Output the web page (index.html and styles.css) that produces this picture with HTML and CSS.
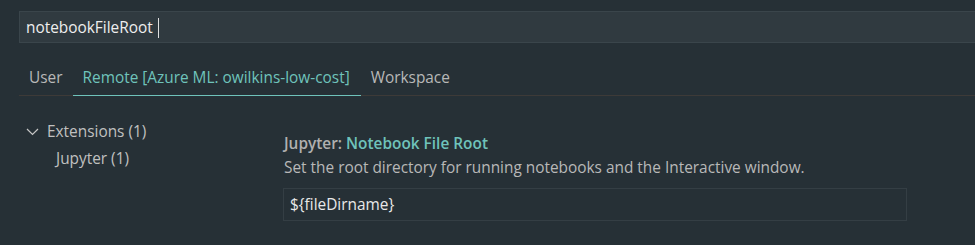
FILE: index.html
```html
<!DOCTYPE html>
<html>
<head>
<meta charset="utf-8">
<link rel="stylesheet" href="styles.css">
</head>
<body>
<div class="page">
  <div class="search"><span class="search-text">notebookFileRoot</span><span class="cursor"></span></div>
  <div class="tabs">
    <div class="tab">User</div>
    <div class="tab active">Remote [Azure ML: owilkins-low-cost]</div>
    <div class="tab">Workspace</div>
  </div>
  <div class="body">
    <div class="tree">
      <div class="tree-row"><svg class="chev" width="13" height="8" viewBox="0 0 13 8"><path d="M1 1 L6.5 6.5 L12 1" fill="none" stroke="#c5c5c5" stroke-width="1.2"/></svg><span>Extensions (1)</span></div>
      <div class="tree-row sub">Jupyter (1)</div>
    </div>
    <div class="setting">
      <div class="title"><span class="cat">Jupyter: </span><span class="name">Notebook File Root</span></div>
      <div class="desc">Set the root directory for running notebooks and the Interactive window.</div>
      <div class="input">${fileDirname}</div>
    </div>
  </div>
</div>
</body>
</html>
```
FILE: styles.css
```css
html, body {
  margin: 0;
  padding: 0;
  background: #263036;
  height: 100%;
  overflow: hidden;
}
.page {
  font-family: "Open Sans", "Noto Sans", sans-serif;
  font-size: 15.4px;
  color: #cccccc;
  padding: 11px 0 0 19px;
}
.search {
  height: 29px;
  border: 1px solid #3a454b;
  border-right: none;
  background: #303a40;
  display: flex;
  align-items: center;
  padding-left: 6px;
  padding-top: 1px;
  box-sizing: content-box;
  color: #eeeeee;
}
.cursor {
  display: inline-block;
  width: 1px;
  height: 20px;
  background: #e0e0e0;
  margin-left: 5px;
}
.tabs {
  display: flex;
  margin-top: 14px;
  height: 38px;
  border-bottom: 1px solid #3d3a38;
}
.tab {
  padding: 3px 10px 0;
  line-height: 35px;
  color: #b8b8b8;
}
.tab.active {
  color: #6fc3bb;
  padding: 3px 11px 0 10px;
  border-bottom: 1px solid #6fc3bb;
  margin-bottom: -1px;
}
.body {
  display: flex;
  padding-top: 22px;
}
.tree {
  width: 265px;
  box-sizing: border-box;
  padding-left: 7px;
  color: #c0c0c0;
}
.tree-row {
  display: flex;
  align-items: center;
  height: 27px;
}
.chev { margin-right: 8px; }
.tree-row.sub { padding-left: 30px; }
.setting {
  padding-top: 16px;
}
.title { font-weight: 600; line-height: 20px; }
.cat { color: #b0b0b0; }
.name { color: #6fc3bb; }
.desc { color: #b8b8b8; line-height: 22px; margin-top: 3px; }
.input {
  margin-top: 9px;
  margin-left: -1px;
  width: 616px;
  height: 31px;
  border: 1px solid #343e44;
  padding-left: 6px;
  display: flex;
  align-items: center;
  color: #e8e8e8;
}
```
